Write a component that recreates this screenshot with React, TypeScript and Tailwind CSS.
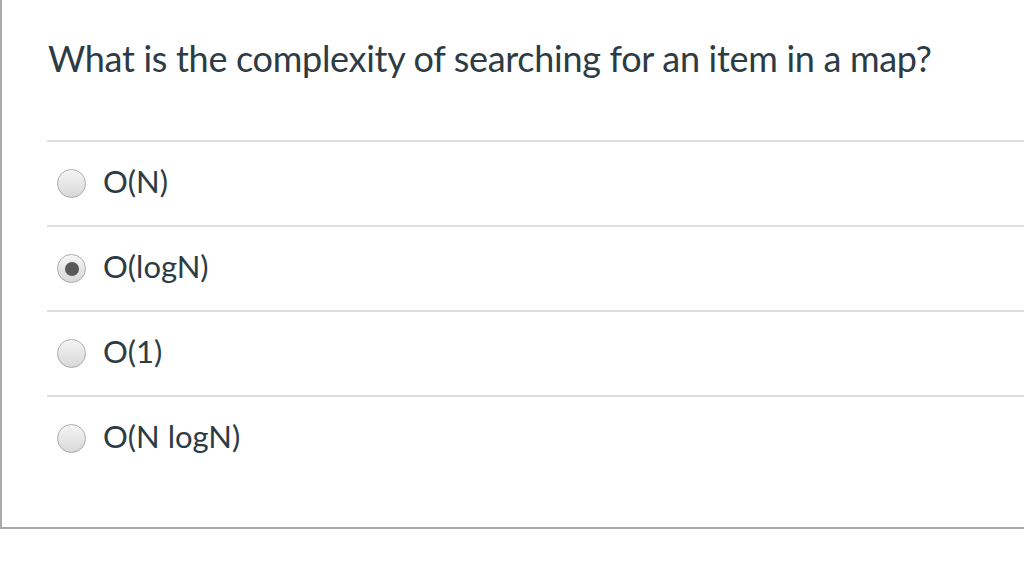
import React from "react";

const options = [
  { label: "O(N)", checked: false },
  { label: "O(logN)", checked: true },
  { label: "O(1)", checked: false },
  { label: "O(N logN)", checked: false },
];

function Radio({ checked }: { checked: boolean }) {
  return (
    <div className="w-[29px] h-[29px] shrink-0 rounded-full border border-[#a9a9a9] bg-gradient-to-b from-[#f4f4f4] to-[#d9d9d9] shadow-[inset_0_1px_0_#fff] flex items-center justify-center">
      {checked && <div className="w-[14px] h-[14px] rounded-full bg-[#595959]" />}
    </div>
  );
}

export default function App() {
  return (
    <div className="w-[1024px] h-[582px] bg-white overflow-hidden" style={{ fontFamily: "Lato, 'Noto Sans', sans-serif" }}>
      <div className="w-[1040px] border-l-2 border-b-2 border-[#aaaaaa] pl-[45px] pt-[37px] pb-[47px]">
        <h1 className="text-[36px] leading-[43px] tracking-[-0.3px] text-[#2d3b45] ml-[1px] mb-[60px] font-normal">
          What is the complexity of searching for an item in a map?
        </h1>
        <div>
          {options.map((o) => (
            <div key={o.label} className="border-t-2 border-[#dddddd] h-[85px] flex items-center pl-[10px]">
              <Radio checked={o.checked} />
              <span className="ml-[17px] mb-[6px] text-[31px] leading-[36px] text-[#2d3b45]">{o.label}</span>
            </div>
          ))}
        </div>
      </div>
    </div>
  );
}
